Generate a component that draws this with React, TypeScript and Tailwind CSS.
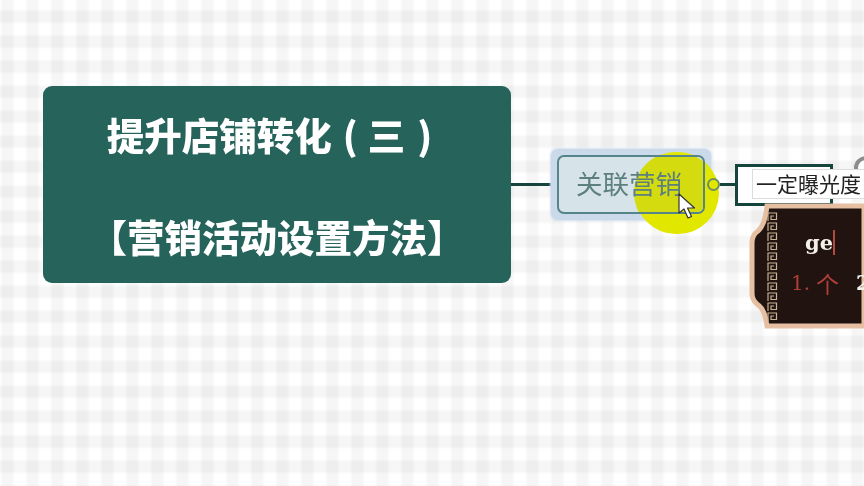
const cjk = 'font-["Noto_Sans_CJK_SC","Noto_Sans",sans-serif]';

function Cursor() {
  return (
    <svg className="absolute left-[126px] top-[44px]" width="20" height="28" viewBox="0 0 20 28">
      <path d="M2 1 L2 20 L7 16 L11 25 L14.5 23.5 L10.5 15 L17.5 15 Z" fill="#fff" stroke="#333" strokeWidth="1.2" strokeLinejoin="round" />
    </svg>
  );
}

function KeyStrip() {
  // greek key border down the left side of the input box
  const rows = [0, 1, 2, 3, 4, 5, 6, 7, 8, 9, 10];
  return (
    <svg className="absolute left-[18px] top-[9px]" width="11" height="112" viewBox="0 0 11 112">
      {rows.map((i) => (
        <path
          key={i}
          d={`M1 ${i * 10 + 9} V${i * 10 + 1} H9.5 V${i * 10 + 7.5} H4 V${i * 10 + 4} H7`}
          fill="none"
          stroke="#c9b394"
          strokeWidth="1.2"
        />
      ))}
    </svg>
  );
}

function InputBox() {
  return (
    <div className="absolute left-[749px] top-[203px] h-[126px] w-[115px]">
      <svg className="absolute inset-0" width="115" height="126" viewBox="0 0 115 126">
        <path
          d="M18 3 H115 V123 H18 Q16 106 8 101 Q3 97 3 90 V40 Q3 32 9 28 Q16 22 18 3 Z"
          fill="#201310"
          stroke="#e6bfa2"
          strokeWidth="5"
        />
      </svg>
      <KeyStrip />
      <div className="absolute left-[56px] top-[25px] flex h-[28px] items-center font-['DejaVu_Serif',serif] text-[21px] leading-none font-bold text-[#f3efe9]">
        ge
        <span className="h-[25px] w-[1.5px] bg-[#b5483f]" />
      </div>
      <div className="absolute left-[42px] top-[66px] flex w-[90px] items-center text-[#b03f38]">
        <span className="font-['DejaVu_Serif',serif] text-[20px] leading-[28px]">1.</span>
        <span className={`ml-[6px] text-[23px] leading-[28px] ${cjk}`}>个</span>
        <span className="ml-[17px] font-['DejaVu_Serif',serif] text-[20px] leading-[28px] font-bold text-[#f3efe9]">2</span>
      </div>
    </div>
  );
}

export default function App() {
  return (
    <div className="relative h-[486px] w-[864px] overflow-hidden bg-white bg-[linear-gradient(90deg,transparent_0px,rgba(0,0,0,0.035)_3px,rgba(0,0,0,0.035)_12px,transparent_15px,transparent_25px),linear-gradient(180deg,transparent_0px,transparent_9px,rgba(0,0,0,0.035)_12px,rgba(0,0,0,0.035)_21px,transparent_24px,transparent_25px)] bg-[size:25px_25px] blur-[0.4px]">
      <div className="flex items-center pl-[43px] pt-[86px]">
        {/* root node */}
        <div className={`flex h-[197px] w-[468px] shrink-0 flex-col items-center justify-center gap-[65px] rounded-[9px] bg-[#25635b] text-[37.5px] leading-[37px] font-black text-white ${cjk}`}>
          <div className="flex items-center">
            提升店铺转化
            <span className="ml-[11px]">(</span>
            <span className="ml-[10px]">三</span>
            <span className="ml-[12px] mr-[15px]">)</span>
          </div>
          <div>【营销活动设置方法】</div>
        </div>
        <div className="h-[3px] w-[40px] shrink-0 bg-[#14443c]" />

        {/* selected node with its highlight circle */}
        <div className="relative shrink-0 rounded-[7px] bg-[#cbdaea] p-[6px] shadow-[0_0_2px_1px_#d5e1ee]">
          <div className="absolute left-[84px] top-[3px] h-[82px] w-[84px] rounded-full bg-[#e2e700]" />
          <div className={`relative flex h-[59px] w-[148px] items-center overflow-hidden rounded-[7px] border-2 border-[#55858a] bg-[#d6e4ea] pb-[3px] pl-[17px] text-[26.5px] whitespace-nowrap text-[#5d7f7f] ${cjk}`}>
            <div className="absolute left-[75px] top-[-5px] h-[82px] w-[84px] rounded-full bg-[#d4dc10]" />
            <span className="relative">关联营销</span>
          </div>
          <Cursor />
        </div>
        <div className="relative -ml-[4px] h-[13px] w-[13px] shrink-0 rounded-full border-2 border-[#6f8f5e] bg-[#e2e700]" />
        <div className="h-[3px] w-[15px] shrink-0 bg-[#14443c]" />

        {/* next node, its label sits over it */}
        <div className="relative h-[42px] w-[98px] shrink-0 border-[3px] border-[#14443c] bg-white">
          <div className={`absolute left-[14px] top-[2px] flex h-[30px] w-[120px] items-center border border-[#dcdcdc] bg-white pl-[3px] text-[21px] whitespace-nowrap text-[#222] ${cjk}`}>
            一定曝光度
          </div>
        </div>
      </div>

      <div className="absolute left-[854px] top-[156px] -z-10 h-[24px] w-[24px] rounded-full border-[4px] border-[#8c8c8c] bg-white" />
      <InputBox />
    </div>
  );
}
